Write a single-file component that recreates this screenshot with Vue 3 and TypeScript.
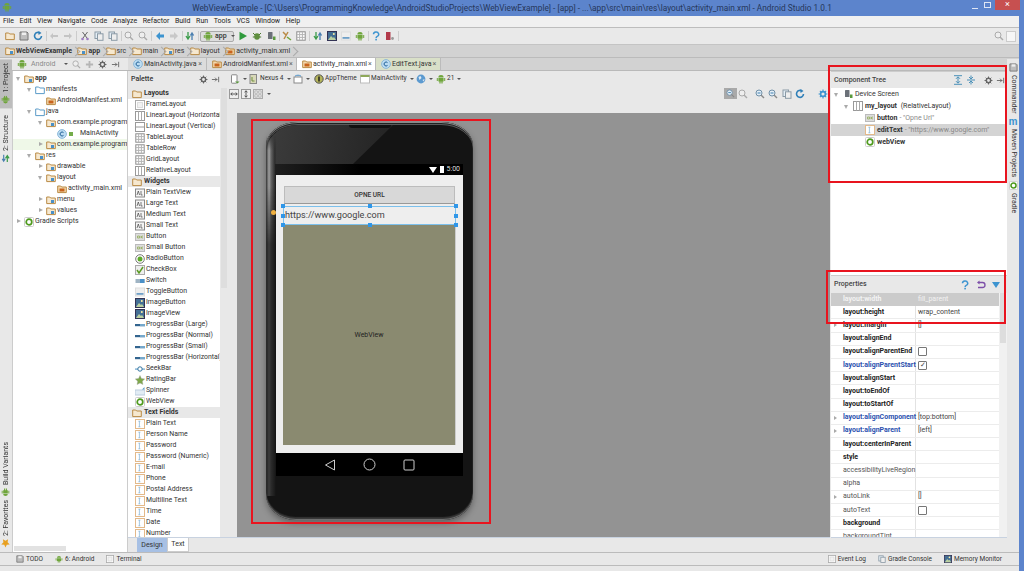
<script setup lang="ts">
interface TreeRow { label: string; depth: number; arrow?: 'open' | 'shut'; icon: string; bold?: boolean; hl?: boolean; lock?: boolean }
interface PalRow { label: string; icon?: string; head?: boolean }
interface PropRow { name: string; value?: string; weight?: 'b' | 'n' | 'blue'; arrow?: boolean; box?: 'on' | 'off'; sel?: boolean }

const menus = ['File', 'Edit', 'View', 'Navigate', 'Code', 'Analyze', 'Refactor', 'Build', 'Run', 'Tools', 'VCS', 'Window', 'Help']
const crumbs = [
  { t: 'WebViewExample', i: 'pkg', b: true }, { t: 'app', i: 'pkg', b: true }, { t: 'src', i: 'folder' },
  { t: 'main', i: 'folder' }, { t: 'res', i: 'pkg' }, { t: 'layout', i: 'folder' }, { t: 'activity_main.xml', i: 'xml' }
]
const tabs = [
  { t: 'MainActivity.java', i: 'cls', w: 79 }, { t: 'AndroidManifest.xml', i: 'xml', w: 90 },
  { t: 'activity_main.xml', i: 'xml', w: 79, on: true }, { t: 'EditText.java', i: 'cls', w: 65, tint: true }
]
const tree: TreeRow[] = [
  { label: 'app', depth: 0, arrow: 'open', icon: 'pkg', bold: true },
  { label: 'manifests', depth: 1, arrow: 'open', icon: 'blue' },
  { label: 'AndroidManifest.xml', depth: 2, icon: 'xml' },
  { label: 'java', depth: 1, arrow: 'open', icon: 'blue' },
  { label: 'com.example.programmingknowledge', depth: 2, arrow: 'open', icon: 'pkg' },
  { label: 'MainActivity', depth: 3, icon: 'cls', lock: true },
  { label: 'com.example.programmingknowledge', depth: 2, arrow: 'shut', icon: 'pkg', hl: true },
  { label: 'res', depth: 1, arrow: 'open', icon: 'pkg' },
  { label: 'drawable', depth: 2, arrow: 'shut', icon: 'pkg' },
  { label: 'layout', depth: 2, arrow: 'open', icon: 'pkg' },
  { label: 'activity_main.xml', depth: 3, icon: 'xml' },
  { label: 'menu', depth: 2, arrow: 'shut', icon: 'pkg' },
  { label: 'values', depth: 2, arrow: 'shut', icon: 'pkg' },
  { label: 'Gradle Scripts', depth: 0, arrow: 'shut', icon: 'web' }
]
const palette: PalRow[] = [
  { label: 'Layouts', head: true },
  { label: 'FrameLayout', icon: 'frame' }, { label: 'LinearLayout (Horizontal)', icon: 'lh' }, { label: 'LinearLayout (Vertical)', icon: 'lv' },
  { label: 'TableLayout', icon: 'grid' }, { label: 'TableRow', icon: 'grid' }, { label: 'GridLayout', icon: 'grid' }, { label: 'RelativeLayout', icon: 'lh' },
  { label: 'Widgets', head: true },
  { label: 'Plain TextView', icon: 'ab' }, { label: 'Large Text', icon: 'ab' }, { label: 'Medium Text', icon: 'ab' }, { label: 'Small Text', icon: 'ab' },
  { label: 'Button', icon: 'ok' }, { label: 'Small Button', icon: 'ok' }, { label: 'RadioButton', icon: 'radio' }, { label: 'CheckBox', icon: 'check' },
  { label: 'Switch', icon: 'switch' }, { label: 'ToggleButton', icon: 'toggle' }, { label: 'ImageButton', icon: 'img' }, { label: 'ImageView', icon: 'img' },
  { label: 'ProgressBar (Large)', icon: 'bar' }, { label: 'ProgressBar (Normal)', icon: 'bar' }, { label: 'ProgressBar (Small)', icon: 'bar' }, { label: 'ProgressBar (Horizontal)', icon: 'bar' },
  { label: 'SeekBar', icon: 'seek' }, { label: 'RatingBar', icon: 'star' }, { label: 'Spinner', icon: 'spin' }, { label: 'WebView', icon: 'web' },
  { label: 'Text Fields', head: true },
  ...['Plain Text', 'Person Name', 'Password', 'Password (Numeric)', 'E-mail', 'Phone', 'Postal Address', 'Multiline Text', 'Time', 'Date', 'Number'].map(label => ({ label, icon: 'field' }))
]
const props: PropRow[] = [
  { name: 'layout:width', value: 'fill_parent', sel: true, weight: 'b' },
  { name: 'layout:height', value: 'wrap_content', weight: 'b' },
  { name: 'layout:margin', value: '[]', weight: 'b', arrow: true },
  { name: 'layout:alignEnd', weight: 'b' },
  { name: 'layout:alignParentEnd', weight: 'b', box: 'off' },
  { name: 'layout:alignParentStart', weight: 'blue', box: 'on' },
  { name: 'layout:alignStart', weight: 'b' },
  { name: 'layout:toEndOf', weight: 'b' },
  { name: 'layout:toStartOf', weight: 'b' },
  { name: 'layout:alignComponent', value: '[top:bottom]', weight: 'blue', arrow: true },
  { name: 'layout:alignParent', value: '[left]', weight: 'blue', arrow: true },
  { name: 'layout:centerInParent', weight: 'b' },
  { name: 'style', weight: 'b' },
  { name: 'accessibilityLiveRegion' },
  { name: 'alpha' },
  { name: 'autoLink', value: '[]', arrow: true },
  { name: 'autoText', box: 'off' },
  { name: 'background', weight: 'b' },
  { name: 'backgroundTint' }
]
const comps = [
  { n: 'button', d: ' - "Opne Url"', i: 'ok' },
  { n: 'editText', d: ' - "https://www.google.com"', i: 'field', sel: true },
  { n: 'webView', d: '', i: 'web' }
]
const tools = [
  ['folder', 'save', 'sync'], ['undo', 'redo'], ['cut', 'copy', 'copy'], ['find', 'find'], ['back', 'fwd'], ['sdk']
]
const tools2 = [['run', 'bug', 'attach'], ['wrench', 'grid'], ['sdk', 'img', 'toggle', 'droid'], ['help', 'mon']]
const handles = [
  { x: 0, y: 0 }, { x: 50, y: 0 }, { x: 100, y: 0 }, { x: 0, y: 50 }, { x: 100, y: 50 }, { x: 0, y: 100 }, { x: 50, y: 100 }, { x: 100, y: 100 }
]
const hStyle = (h: { x: number; y: number }) => ({ left: `${h.x}%`, top: `${h.y}%` })
</script>

<template>
  <div class="app">
    <svg class="defs" width="0" height="0" aria-hidden="true">
      <defs>
        <symbol id="folder" viewBox="0 0 10 10"><path d="M.7 2h3l1 1h4.600v5.600H.7z" fill="#f6e8cf" stroke="#b98a45"/></symbol>
        <symbol id="blue" viewBox="0 0 10 10"><path d="M.7 2h3l1 1h4.600v5.600H.7z" fill="#fff" stroke="#5b9bc8"/></symbol>
        <symbol id="pkg" viewBox="0 0 10 10"><path d="M.7 2h3l1 1h4.600v5.600H.7z" fill="#f6e8cf" stroke="#b98a45"/><rect x="5" y="5" width="3" height="3" fill="#4a90c8"/></symbol>
        <symbol id="xml" viewBox="0 0 10 10"><path d="M.7 2h3l1 1h4.600v5.600H.7z" fill="#f3d9ae" stroke="#b98a45"/><rect x="2.500" y="4.500" width="5" height="3" fill="#c8641e"/></symbol>
        <symbol id="cls" viewBox="0 0 10 10"><circle cx="5" cy="5" r="4.400" fill="#bcdcf2" stroke="#8cb8d8"/><path d="M6.500 3.600a2 2 0 1 0 0 2.800" fill="none" stroke="#1f5f96"/></symbol>
        <symbol id="save" viewBox="0 0 10 10"><path d="M1 1h7l1 1v7H1z" fill="#bdbdbd" stroke="#777"/><rect x="3" y="1.500" width="4" height="2.500" fill="#eee"/></symbol>
        <symbol id="sync" viewBox="0 0 10 10"><path d="M8.500 5A3.500 3.500 0 1 1 7 2" fill="none" stroke="#2f7fb8" stroke-width="1.600"/><path d="M5.500 0l3 2-3 2z" fill="#2f7fb8"/></symbol>
        <symbol id="undo" viewBox="0 0 10 10"><path d="M1 5l3-3v2h5v2H4v2z" fill="#c4c4c4"/></symbol>
        <symbol id="redo" viewBox="0 0 10 10"><path d="M9 5L6 2v2H1v2h5v2z" fill="#c4c4c4"/></symbol>
        <symbol id="revert" viewBox="0 0 10 10"><path d="M3 2.500h3.500a2.500 2.500 0 0 1 0 5H2" fill="none" stroke="#7d4fa8" stroke-width="1.300"/><path d="M3.500.5L1 2.500l2.500 2z" fill="#7d4fa8"/></symbol>
        <symbol id="cut" viewBox="0 0 10 10"><path d="M2.500 1L7 7M7.500 1L3 7" stroke="#666" fill="none"/><circle cx="2.500" cy="8" r="1.300" fill="#9c7cc0"/><circle cx="7.500" cy="8" r="1.300" fill="#9c7cc0"/></symbol>
        <symbol id="copy" viewBox="0 0 10 10"><rect x="1" y="1" width="5.500" height="6.500" fill="#e4eef6" stroke="#8a9aa6"/><rect x="3.500" y="2.800" width="5.500" height="6.500" fill="#eee" stroke="#8a9aa6"/></symbol>
        <symbol id="find" viewBox="0 0 10 10"><circle cx="4" cy="4" r="3" fill="#eee" stroke="#aaa"/><path d="M6 6l3 3" stroke="#aaa" stroke-width="1.400"/></symbol>
        <symbol id="zoom" viewBox="0 0 10 10"><circle cx="4" cy="4" r="3" fill="#e4eef6" stroke="#6f8fa8"/><path d="M6 6l3 3" stroke="#8a8a8a" stroke-width="1.400"/><path d="M2.500 4h3" stroke="#3d7fb0"/></symbol>
        <symbol id="back" viewBox="0 0 10 10"><path d="M1 5l4-4v2.500h4v3H5V9z" fill="#3d94d0"/></symbol>
        <symbol id="fwd" viewBox="0 0 10 10"><path d="M9 5L5 1v2.500H1v3h4V9z" fill="#c8c8c8"/></symbol>
        <symbol id="plus" viewBox="0 0 10 10"><path d="M5 1v8M1 5h8" stroke="#b5b5b5" stroke-width="2"/></symbol>
        <symbol id="sdk" viewBox="0 0 10 10"><path d="M3 1v6M1 5l2 3 2-3" stroke="#3a9b4a" fill="none" stroke-width="1.300"/><path d="M7 9V3M5.400 4.500L7 2l1.600 2.500" stroke="#4a7fb0" fill="none" stroke-width="1.300"/></symbol>
        <symbol id="droid" viewBox="0 0 10 10"><path d="M2.400 4h5.200v3.600H6.600V9.500H5.400V7.600H4.600V9.500H3.400V7.600H2.400zM2.400 3.500A2.600 2.400 0 0 1 7.600 3.500zM.8 4h1v3h-1zM8.200 4h1v3h-1z" fill="#6fa53b"/></symbol>
        <symbol id="run" viewBox="0 0 10 10"><path d="M1.500.8L9 5l-7.500 4.200z" fill="#2f9a3c"/></symbol>
        <symbol id="bug" viewBox="0 0 10 10"><ellipse cx="5" cy="5.500" rx="2.800" ry="3.300" fill="#5f8f3e"/><path d="M1 2l2 2M9 2L7 4M.8 6h2M7.200 6h2" stroke="#4d7a30"/></symbol>
        <symbol id="attach" viewBox="0 0 10 10"><rect x="2" y="1" width="4.500" height="7" rx=".6" fill="#6b7078"/><path d="M7 5.500h2.500v3.500H7z" fill="#5a9a3e"/></symbol>
        <symbol id="dev" viewBox="0 0 10 10"><rect x="1.500" y=".8" width="5.500" height="8.400" rx=".6" fill="#fff" stroke="#888"/><path d="M5 7.500h4.500L7.500 9.500z" fill="#5a9a3e"/></symbol>
        <symbol id="nx" viewBox="0 0 10 10"><rect x="1" y=".5" width="6.500" height="9" fill="#d8d8b8" stroke="#888"/><path d="M3 3v4h2.500" stroke="#6f8f3e" fill="none"/></symbol>
        <symbol id="rot" viewBox="0 0 10 10"><rect x="1" y="3" width="8" height="6" fill="#fff" stroke="#888"/><path d="M2 2.200a4 3 0 0 1 6 0" fill="none" stroke="#4a90c8"/></symbol>
        <symbol id="theme" viewBox="0 0 10 10"><circle cx="5" cy="5" r="4.200" fill="#b4b45a" stroke="#555"/><path d="M5 2.500v5" stroke="#222" stroke-width="1.500"/></symbol>
        <symbol id="act" viewBox="0 0 10 10"><rect x=".5" y="1" width="9" height="8" fill="#fff" stroke="#bbb"/><rect x=".5" y="1" width="9" height="2" fill="#8ea85a"/></symbol>
        <symbol id="globe" viewBox="0 0 10 10"><circle cx="5" cy="5" r="4.400" fill="#5c9ad0"/><path d="M2.500 3l2-1 1 2-2 2zM6.500 6l2-1-.6 2.500z" fill="#dfe9f2"/></symbol>
        <symbol id="wrench" viewBox="0 0 10 10"><path d="M1 1l3 3M6 1L2 8" stroke="#b98a45" stroke-width="1.500"/><path d="M5 6l4 3" stroke="#6fa53b" stroke-width="1.500"/></symbol>
        <symbol id="grid" viewBox="0 0 10 10"><rect x=".8" y=".8" width="8.400" height="8.400" fill="#fff" stroke="#8d8d8d"/><path d="M.8 3.600h8.400M.8 6.400h8.400M3.600.8v8.400M6.400.8v8.400" stroke="#b5b5b5"/></symbol>
        <symbol id="fitw" viewBox="0 0 10 10"><rect x=".5" y=".5" width="9" height="9" fill="#eee" stroke="#999"/><path d="M1.800 5h6.400M3.200 3.500L1.800 5l1.400 1.500M6.800 3.500L8.200 5 6.800 6.500" fill="none" stroke="#333" stroke-width=".8"/></symbol>
        <symbol id="fith" viewBox="0 0 10 10"><rect x=".5" y=".5" width="9" height="9" fill="#eee" stroke="#999"/><path d="M5 1.800v6.400M3.500 3.200L5 1.800l1.500 1.400M3.500 6.800L5 8.200l1.500-1.400" fill="none" stroke="#333" stroke-width=".8"/></symbol>
        <symbol id="dots" viewBox="0 0 10 10"><rect x=".5" y=".5" width="9" height="9" fill="#ddd" stroke="#aaa"/><path d="M2 2h2.200v2.200H2zM5.800 2H8v2.200H5.800zM2 5.800h2.200V8H2zM5.800 5.800H8V8H5.800z" fill="#fff" stroke="#888" stroke-width=".5"/></symbol>
        <symbol id="expand" viewBox="0 0 10 10"><path d="M1 .7h8M1 9.300h8" stroke="#4a90b8"/><path d="M5 2v6M3 3.800L5 1.800l2 2M3 6.200L5 8.200l2-2" fill="none" stroke="#4a90b8"/></symbol>
        <symbol id="collapse" viewBox="0 0 10 10"><path d="M1 5h8" stroke="#4a90b8"/><path d="M5 .5v3M3 2l2 2 2-2M5 9.500v-3M3 8l2-2 2 2" fill="none" stroke="#4a90b8"/></symbol>
        <symbol id="help" viewBox="0 0 10 10"><path d="M2.500 3.300a2.600 2.300 0 1 1 3.700 2.100c-.8.400-1.100.9-1.100 1.500" fill="none" stroke="#3d94d0" stroke-width="1.500"/><rect x="4.300" y="7.800" width="1.600" height="1.600" fill="#3d94d0"/></symbol>
        <symbol id="mon" viewBox="0 0 10 10"><rect x="1" y="1" width="4.500" height="8" fill="#b23a4a"/><circle cx="7.500" cy="7.500" r="1.400" fill="#999"/></symbol>
        <symbol id="frame" viewBox="0 0 10 10"><rect x=".5" y=".5" width="9" height="9" fill="#fff" stroke="#aaa"/><rect x="2.500" y="2.500" width="5" height="5" fill="#f2f2f2" stroke="#ddd"/></symbol>
        <symbol id="lh" viewBox="0 0 10 10"><rect x=".5" y=".5" width="9" height="9" fill="#fff" stroke="#999"/><path d="M3.500.5v9M6.500.5v9" stroke="#aaa"/></symbol>
        <symbol id="lv" viewBox="0 0 10 10"><rect x=".5" y=".5" width="9" height="9" fill="#fff" stroke="#999"/><path d="M.5 5h9" stroke="#999"/></symbol>
        <symbol id="ab" viewBox="0 0 10 10"><rect x=".5" y="1" width="9" height="8" fill="#f4f4f4" stroke="#888"/><path d="M2 7l1.300-4L4.600 7M6 3v4h1.600" fill="none" stroke="#444" stroke-width=".7"/></symbol>
        <symbol id="ok" viewBox="0 0 10 10"><rect x=".5" y="1.500" width="9" height="7" fill="#ddd" stroke="#bbb"/><path d="M2.500 4h2v2h-2zM6 3.800v2.400M8 3.800L6 5l2 1.200" fill="none" stroke="#8aa84a" stroke-width=".7"/></symbol>
        <symbol id="radio" viewBox="0 0 10 10"><circle cx="5" cy="5" r="4.300" fill="#fff" stroke="#777"/><circle cx="5" cy="5" r="2.500" fill="#5caa28"/></symbol>
        <symbol id="check" viewBox="0 0 10 10"><rect x=".5" y=".5" width="9" height="9" fill="#eee" stroke="#aaa"/><path d="M2 5l2 3 4-6" fill="none" stroke="#5a9a22" stroke-width="1.500"/></symbol>
        <symbol id="switch" viewBox="0 0 10 10"><rect x=".5" y="3" width="9" height="4" fill="#9fb4c4"/><rect x="5" y="3" width="4.500" height="4" fill="#4a90c8"/></symbol>
        <symbol id="toggle" viewBox="0 0 10 10"><rect x=".5" y="1" width="9" height="8" fill="#eee" stroke="#ddd"/><rect x="1.500" y="6" width="7" height="1.800" fill="#6fa0c8"/></symbol>
        <symbol id="img" viewBox="0 0 10 10"><rect x=".5" y=".5" width="9" height="9" fill="#446f94" stroke="#335"/><path d="M1 9l3-4 2 2 1-1 2 3z" fill="#bbd0a0"/><circle cx="6.800" cy="3" r="1" fill="#fff2a8"/></symbol>
        <symbol id="bar" viewBox="0 0 10 10"><rect y="4" width="10" height="2.200" fill="#33658f"/><rect x="5" y="4" width="5" height="2.200" fill="#75a8cc"/></symbol>
        <symbol id="seek" viewBox="0 0 10 10"><rect y="4.400" width="10" height="1.400" fill="#7fb0d4"/><circle cx="5" cy="5" r="2.200" fill="#fff" stroke="#33759f"/></symbol>
        <symbol id="star" viewBox="0 0 10 10"><path d="M5 .5l1.400 3 3.300.4-2.400 2.300.6 3.300L5 8l-2.900 1.500.6-3.300L.3 3.900l3.300-.4z" fill="#7ea84a" stroke="#999" stroke-width=".4"/></symbol>
        <symbol id="ostar" viewBox="0 0 10 10"><path d="M5 .5l1.400 3 3.300.4-2.400 2.300.6 3.300L5 8l-2.900 1.500.6-3.300L.3 3.900l3.300-.4z" fill="#e8a020"/></symbol>
        <symbol id="spin" viewBox="0 0 10 10"><rect y="4" width="10" height="5" fill="#e2ecf4" stroke="#bcd"/><path d="M9.500 1L7 3.500h2.500z" fill="#5a9ac8"/></symbol>
        <symbol id="web" viewBox="0 0 10 10"><rect x=".5" y=".5" width="9" height="9" rx="1" fill="#fff" stroke="#ccc"/><circle cx="5" cy="5" r="2.800" fill="none" stroke="#4f9a1e" stroke-width="1.700"/></symbol>
        <symbol id="field" viewBox="0 0 10 10"><rect x=".5" y=".5" width="9" height="9" fill="#fff" stroke="#e3b98a"/><path d="M3.400 2.200h2M3.400 7.800h2M4.400 2.200v5.600" stroke="#7fb0d4" stroke-width=".7"/></symbol>
        <symbol id="gear" viewBox="0 0 10 10"><circle cx="5" cy="5" r="2.400" fill="none" stroke="currentColor" stroke-width="1.600"/><path d="M5 .6v2M5 7.400v2M.6 5h2M7.400 5h2M1.900 1.900l1.400 1.400M6.700 6.700l1.400 1.400M8.100 1.900L6.700 3.300M3.300 6.700L1.900 8.100" stroke="currentColor" stroke-width="1.100"/></symbol>
        <symbol id="pin" viewBox="0 0 10 10"><path d="M1 5h6M4.500 3l2 2-2 2M8.500 2v6" fill="none" stroke="#666"/></symbol>
      </defs>
    </svg>

    <header class="title">
      <svg class="ico ttl-logo"><use href="#droid" /></svg>
      <span class="ttl-text">WebViewExample - [C:\Users\ProgrammingKnowledge\AndroidStudioProjects\WebViewExample] - [app] - ...\app\src\main\res\layout\activity_main.xml - Android Studio 1.0.1</span>
      <div class="win">
        <span class="min"></span><span class="max"></span><span class="close">×</span>
      </div>
    </header>

    <nav class="menu">
      <span v-for="m in menus" :key="m">{{ m }}</span>
    </nav>

    <div class="toolbar">
      <template v-for="(g, gi) in tools" :key="gi">
        <span class="tg"><svg v-for="(t, i) in g" :key="i" class="ico"><use :href="`#${t}`" /></svg></span>
      </template>
      <span class="appsel"><svg class="ico"><use href="#droid" /></svg>app<i class="caret"></i></span>
      <template v-for="(g, gi) in tools2" :key="gi">
        <span class="tg"><svg v-for="(t, i) in g" :key="i" class="ico"><use :href="`#${t}`" /></svg></span>
      </template>
      <span class="grow"></span>
      <svg class="ico"><use href="#find" /></svg>
      <span class="user"></span>
    </div>

    <div class="crumbs">
      <span v-for="c in crumbs" :key="c.t" class="crumb" :class="{ b: c.b }">
        <svg class="ico"><use :href="`#${c.i}`" /></svg>{{ c.t }}<i class="chev"></i>
      </span>
    </div>

    <div class="tabrow">
      <div class="projhead">
        <svg class="ico"><use href="#droid" /></svg><span class="phl">Android</span><i class="caret"></i>
        <svg class="ico sm"><use href="#find" /></svg>
        <svg class="ico sm"><use href="#plus" /></svg>
        <svg class="ico sm"><use href="#gear" /></svg>
        <svg class="ico sm"><use href="#pin" /></svg>
      </div>
      <div v-for="t in tabs" :key="t.t" class="tab" :class="{ on: t.on, tint: t.tint }" :style="{ width: t.w + 'px' }">
        <svg class="ico"><use :href="`#${t.i}`" /></svg>{{ t.t }}<b>×</b>
      </div>
    </div>

    <div class="body">
      <aside class="strip left">
        <span class="vt active"><svg class="ico vi"><use href="#droid" /></svg>1: Project</span>
        <span class="vt"><svg class="ico vi"><use href="#sdk" /></svg>2: Structure</span>
        <span class="grow"></span>
        <span class="vt bv"><svg class="ico vi"><use href="#droid" /></svg>Build Variants</span>
        <span class="vt fav"><svg class="ico vi"><use href="#ostar" /></svg>2: Favorites</span>
      </aside>

      <section class="project">
        <div v-for="(r, i) in tree" :key="i" class="trow" :class="{ hl: r.hl, b: r.bold }" :style="{ paddingLeft: r.depth * 11 + 'px' }">
          <i class="arr" :class="r.arrow"></i>
          <svg class="ico"><use :href="`#${r.icon}`" /></svg>
          <i v-if="r.lock" class="lock"></i>{{ r.label }}
        </div>
        <span class="grow"></span>
        <div class="hscroll"></div>
      </section>

      <section class="editor">
        <div class="edtop">
          <div class="palette">
            <div class="palhead"><span>Palette</span><span class="grow"></span><svg class="ico sm"><use href="#gear" /></svg><svg class="ico sm"><use href="#pin" /></svg></div>
            <div class="palbody">
              <div class="pallist">
                <div v-for="p in palette" :key="p.label" class="prow" :class="{ head: p.head }">
                  <svg v-if="p.head" class="ico"><use href="#folder" /></svg>
                  <svg v-else class="ico"><use :href="`#${p.icon}`" /></svg>
                  {{ p.label }}
                </div>
              </div>
              <div class="vscroll"><i></i></div>
            </div>
          </div>
          <div class="design">
            <div class="dt1">
              <span class="dg w19"><svg class="ico"><use href="#dev" /></svg><i class="caret"></i></span>
              <span class="dg w44"><svg class="ico"><use href="#nx" /></svg><span>Nexus 4</span><i class="caret"></i></span>
              <span class="dg w21"><svg class="ico"><use href="#rot" /></svg><i class="caret"></i></span>
              <span class="dg w46"><svg class="ico"><use href="#theme" /></svg><span>AppTheme</span></span>
              <span class="dg w56"><svg class="ico"><use href="#act" /></svg><span>MainActivity</span><i class="caret"></i></span>
              <span class="dg w20"><svg class="ico"><use href="#globe" /></svg><i class="caret"></i></span>
              <span class="dg"><svg class="ico"><use href="#droid" /></svg><span>21</span><i class="caret"></i></span>
            </div>
            <div class="dt2">
              <svg class="ico bx"><use href="#fitw" /></svg>
              <svg class="ico bx"><use href="#fith" /></svg>
              <svg class="ico bx"><use href="#dots" /></svg><i class="caret"></i>
              <span class="grow"></span>
              <span class="dsel"><svg class="ico sm"><use href="#zoom" /></svg></span>
              <svg class="ico m1"><use href="#find" /></svg>
              <svg class="ico m2"><use href="#zoom" /></svg>
              <svg class="ico m3"><use href="#zoom" /></svg>
              <svg class="ico m3"><use href="#copy" /></svg>
              <svg class="ico m3"><use href="#sync" /></svg>
              <svg class="ico last"><use href="#gear" /></svg>
            </div>
            <div class="canvas">
              <div class="phone">
                <i class="glare"></i>
                <i class="sheen"></i>
                <i class="earpiece"></i>
                <div class="status">
                  <i class="wifi"></i><i class="batt"></i><span>5:00</span>
                </div>
                <div class="screen">
                  <div class="btn">OPNE URL</div>
                  <div class="edit">
                    https://www.google.com
                    <i v-for="(h, i) in handles" :key="i" class="h" :style="hStyle(h)"></i>
                    <i class="anchor"></i>
                  </div>
                  <div class="webview">WebView</div>
                </div>
                <div class="navbar">
                  <svg width="12" height="12" viewBox="0 0 12 12"><path d="M10.500 1L1.500 6l9 5z" fill="none" stroke="#ccc" stroke-width="1"/></svg>
                  <svg width="13" height="13" viewBox="0 0 13 13"><circle cx="6.500" cy="6.500" r="5.500" fill="none" stroke="#ccc" stroke-width="1"/></svg>
                  <svg width="12" height="12" viewBox="0 0 12 12"><rect x="1" y="1" width="10" height="10" rx="1" fill="none" stroke="#ccc" stroke-width="1"/></svg>
                </div>
              </div>
            </div>
          </div>
        </div>
        <div class="edtabs"><span class="dtab on">Design</span><span class="dtab">Text</span></div>
      </section>

      <aside class="rpanel">
        <div class="phead">Component Tree<span class="grow"></span>
          <svg class="ico"><use href="#expand" /></svg><svg class="ico"><use href="#collapse" /></svg><svg class="ico sm g"><use href="#gear" /></svg><svg class="ico sm"><use href="#pin" /></svg>
        </div>
        <div class="ctree">
          <div class="crow"><i class="arr open"></i><svg class="ico"><use href="#attach" /></svg>Device Screen</div>
          <div class="crow d1"><i class="arr open"></i><svg class="ico"><use href="#lh" /></svg><b>my_layout</b>&nbsp;(RelativeLayout)</div>
          <div v-for="c in comps" :key="c.n" class="crow d2" :class="{ sel: c.sel }">
            <svg class="ico"><use :href="`#${c.i}`" /></svg><b>{{ c.n }}</b><span class="dim">{{ c.d }}</span>
          </div>
        </div>
        <div class="phead props-h">Properties<span class="grow"></span>
          <svg class="ico"><use href="#help" /></svg><svg class="ico"><use href="#revert" /></svg><i class="filter"></i>
        </div>
        <div class="pwrap">
          <div class="ptable">
            <div v-for="p in props" :key="p.name" class="pr" :class="{ sel: p.sel }">
              <div class="pn" :class="p.weight">
                <i class="tri" :class="{ show: p.arrow }"></i>{{ p.name }}
              </div>
              <div class="pv">
                <template v-if="p.value">{{ p.value }}</template>
                <i v-if="p.box" class="cb" :class="p.box">{{ p.box === 'on' ? '✓' : '' }}</i>
              </div>
            </div>
          </div>
          <div class="pscroll"><i></i></div>
        </div>
        <div class="pfoot"></div>
      </aside>

      <aside class="strip right">
        <span class="vt r"><svg class="ico vi"><use href="#save" /></svg>Commander</span>
        <span class="vt r"><b class="m">m</b>Maven Projects</span>
        <span class="vt r"><svg class="ico vi"><use href="#web" /></svg>Gradle</span>
      </aside>
    </div>

    <footer class="tools">
      <span class="ti first"><svg class="ico"><use href="#save" /></svg>TODO</span>
      <span class="ti"><svg class="ico"><use href="#droid" /></svg>6: Android</span>
      <span class="ti"><svg class="ico"><use href="#frame" /></svg>Terminal</span>
      <span class="grow"></span>
      <span class="ti"><svg class="ico"><use href="#frame" /></svg>Event Log</span>
      <span class="ti"><svg class="ico"><use href="#copy" /></svg>Gradle Console</span>
      <span class="ti last"><svg class="ico"><use href="#img" /></svg>Memory Monitor</span>
    </footer>
    <div class="statusbar"></div>
    <div class="winedge"></div>

    <i class="redbox rb1"></i>
    <i class="redbox rb2"></i>
    <i class="redbox rb3"></i>
  </div>
</template>

<style>
html, body { margin: 0; padding: 0; background: #e8e8e8; }
</style>

<style scoped>
.app { position: relative; width: 1024px; height: 571px; overflow: hidden; display: flex; flex-direction: column; background: #e8e8e8; font: 7px/1 Roboto, "Open Sans", sans-serif; color: #333; padding-right: 5px; box-sizing: border-box; }
.defs { position: absolute; }
.grow { flex: 1; }
.ico { width: 10px; height: 10px; flex: none; display: block; color: #666; }
.ico.sm { width: 9px; height: 9px; }
.caret { width: 0; height: 0; border: 2px solid transparent; border-top: 2.5px solid #555; border-bottom: 0; margin-left: 2px; flex: none; display: block; }

.title { height: 16px; margin-right: -5px; background: #5c84cc; display: flex; align-items: center; position: relative; flex: none; color: #26375a; }
.ttl-logo { position: absolute; left: 2px; top: 2px; }
.ttl-text { margin: 0 auto; font-size: 8.3px; white-space: nowrap; }
.win { position: absolute; right: 4px; top: 0; display: flex; align-items: flex-start; }
.min { width: 6px; height: 1px; background: #dfe6f4; margin: 8px 6px 0 0; }
.max { width: 5px; height: 4px; border: 1px solid #dfe6f4; margin: 2px 4px 0 0; }
.close { width: 25px; height: 10px; background: #c75050; color: #fff; font-size: 9px; line-height: 9px; text-align: center; }

.menu { height: 11px; flex: none; padding-left: 3px; display: flex; align-items: center; gap: 5.6px; background: #f0f0f0; border-bottom: 1px solid #bdbdbd; color: #222; }
.toolbar { height: 16px; flex: none; display: flex; align-items: center; padding: 0 3px 0 2px; background: #e9e9e9; }
.tg { display: flex; gap: 4px; padding: 0 3px 0 2.5px; border-right: 1px solid #ccc; }
.tg:last-of-type { border: 0; }
.appsel { height: 11px; box-sizing: border-box; padding: 0 2px; margin: 0 1px 0 1px; display: flex; align-items: center; gap: 2px; border: 1px solid #aaa; border-radius: 2px; background: #ddd; font-weight: 500; width: 34px; }
.user { width: 8px; height: 9px; background: #f6f6f6; border: 1px solid #ccc; margin-left: 2px; }

.crumbs { height: 13px; flex: none; display: flex; align-items: center; padding-left: 5px; background: #d2d2d2; border-top: 1px solid #c4c4c4; box-sizing: border-box; }
.crumb { display: flex; align-items: center; gap: 1px; margin-right: -1.5px; }
.crumb.b { font-weight: 700; }
.chev { width: 6px; height: 6px; border-top: 1px solid #aaa; border-right: 1px solid #aaa; transform: rotate(45deg); margin-left: -1px; }

.tabrow { height: 14px; flex: none; display: flex; background: #d2d2d2; border-bottom: 1px solid #b9b9b9; box-sizing: border-box; border-top: 1px solid #bbb; }
.projhead { width: 128px; flex: none; display: flex; align-items: center; padding-left: 17px; gap: 4px; box-sizing: border-box; background: #e8e8e8; color: #888; }
.phl { width: 27px; }
.tab { height: 12px; display: flex; align-items: center; gap: 1px; padding: 0 4px 0 5px; box-sizing: border-box; background: #dcdcdc; border-right: 1px solid #bbb; white-space: nowrap; }
.tab b { font-weight: 400; margin-left: auto; color: #666; }
.tab.on { background: #fff; }
.tab.tint { background: #d9e0c8; }

.body { flex: 1; min-height: 0; display: flex; }
.strip { width: 12px; flex: none; display: flex; flex-direction: column; align-items: center; background: #e8e8e8; }
.strip.left { border-right: 1px solid #ccc; }
.vt { writing-mode: vertical-rl; transform: rotate(180deg); display: flex; align-items: center; gap: 3px; padding: 2px 0 4px; width: 12px; white-space: nowrap; margin-bottom: 7px; }
.vt.active { background: #bdbdbd; margin-top: -12px; padding-top: 4px; margin-bottom: 3px; }
.vt.bv { margin-bottom: -3px; }
.vt.fav { margin-bottom: 2px; }
.vi { width: 9px; height: 9px; }
.vt.r { transform: none; margin: 0 0 4px; padding: 0; gap: 3px; }
.m { color: #3d94d0; font-size: 10px; writing-mode: horizontal-tb; line-height: 8px; }
.strip.right { padding-top: 4px; margin-top: -12px; }

.project { width: 115px; flex: none; background: #fff; display: flex; flex-direction: column; padding-top: 2px; box-sizing: border-box; overflow: hidden; border-right: 1px solid #ccc; }
.trow { height: 11px; flex: none; display: flex; align-items: center; white-space: nowrap; gap: 1px; }
.trow.hl { background: #eff8e8; }
.trow.b { font-weight: 700; }
.arr { width: 10px; flex: none; height: 5px; position: relative; display: block; }
.arr.open::after { content: ""; position: absolute; left: 3px; top: 1px; border: 2.5px solid transparent; border-top: 4px solid #aaa; border-bottom: 0; }
.arr.shut::after { content: ""; position: absolute; left: 4px; top: 0; border: 2.5px solid transparent; border-left: 4px solid #aaa; border-right: 0; }
.lock { width: 10px; flex: none; height: 4px; display: block; margin-left: 1px; background: linear-gradient(90deg, #74ac4a 40%, transparent 40%); }
.hscroll { height: 5px; width: 52px; margin: 0 0 1px 1px; background: #e2e2e2; flex: none; }

.editor { flex: 1; min-width: 0; display: flex; flex-direction: column; }
.edtop { flex: 1; min-height: 0; display: flex; }
.palette { width: 100px; flex: none; display: flex; flex-direction: column; }
.palhead { height: 17px; flex: none; display: flex; align-items: center; gap: 3px; padding: 0 8px 0 3px; font-weight: 500; background: #e8e8e8; }
.palbody { flex: 1; min-height: 0; display: flex; }
.pallist { width: 92px; flex: none; background: #fff; overflow: hidden; }
.prow { height: 11px; display: flex; align-items: center; gap: 1px; padding-left: 7px; white-space: nowrap; font-size: 6.9px; }
.prow.head { padding-left: 4px; background: #e8e8e8; font-weight: 700; gap: 2px; font-size: 7px; }
.vscroll { width: 6px; margin-left: 1px; }
.vscroll i { display: block; height: 200px; background: #dedede; }

.design { flex: 1; min-width: 0; display: flex; flex-direction: column; }
.dt1 { height: 15px; flex: none; display: flex; align-items: center; padding-left: 2px; font-size: 6.5px; }
.dg { display: flex; align-items: center; gap: 1px; flex: none; height: 11px; box-sizing: border-box; }
.w19 { width: 19px; } .w44 { width: 44px; } .w21 { width: 21px; } .w46 { width: 46px; } .w56 { width: 56px; } .w20 { width: 20px; }
.dt2 { height: 15px; flex: none; display: flex; align-items: center; gap: 2px; padding: 0 2px 0 1px; margin-bottom: 12px; }
.bx { background: #f2f2f2; }
.dsel { width: 13px; height: 11px; background: #a9a9a9; display: flex; align-items: center; justify-content: center; }
.m1 { margin-left: -1px; }
.m2 { margin-left: 5px; }
.m3 { margin-left: 1.5px; }
.dt2 .last { margin-left: 11px; color: #3d94d0; }
.canvas { flex: 1; min-height: 0; margin-left: 9px; background: #939393; padding: 9px 0 0 29px; }

.phone { position: relative; width: 207px; height: 398px; box-sizing: border-box; padding: 42px 10px 0; border-radius: 32px 32px 30px 30px / 24px 24px 26px 26px; background: #141414; box-shadow: 0 3px 6px rgba(0,0,0,.35), inset 0 1px 0 #8a8a8a, inset 0 2px 0 #222, inset 0 3px 0 #5a5a5a, inset 0 -1px 1px #777, inset 0 -3px 1px #333; }
.glare { position: absolute; left: 2px; top: 3px; width: 125px; height: 39px; border-radius: 30px 0 0 0 / 22px 0 0 0; background: linear-gradient(100deg, #3c3c3c, #232323); clip-path: polygon(0 0, 100% 0, 68% 100%, 0 100%); }
.sheen { position: absolute; left: 0; top: 14px; bottom: 24px; width: 10px; background: linear-gradient(90deg, #333 0, #a0a0a0 3px, #666 5px, #2a2a2a 9px, transparent 10px); -webkit-mask-image: linear-gradient(180deg, transparent 0, #000 4%, #000 14%, rgba(0,0,0,.3) 30%, rgba(0,0,0,.3) 100%); mask-image: linear-gradient(180deg, transparent 0, #000 4%, #000 14%, rgba(0,0,0,.3) 30%, rgba(0,0,0,.3) 100%); }
.earpiece { position: absolute; left: 83px; top: 3px; width: 42px; height: 3px; border-radius: 0 0 4px 4px; background: #111; }
.status { position: relative; height: 11px; background: linear-gradient(90deg, #1e1e1e, #000 45%); display: flex; align-items: center; justify-content: flex-end; gap: 3px; padding-right: 3px; color: #ddd; font: 7px/1 Roboto, sans-serif; }
.wifi { width: 0; height: 0; border: 4px solid transparent; border-top: 6px solid #fff; border-bottom: 0; }
.batt { width: 4px; height: 7px; background: #fff; }
.screen { position: relative; height: 278px; box-sizing: border-box; padding: 11px 7px 8px; background: #eee; display: flex; flex-direction: column; }
.btn { height: 18px; box-sizing: border-box; margin: 0 1px; background: #d8d8d8; border: 1px solid #bcbcbc; border-bottom: 1px solid #999; display: flex; align-items: center; justify-content: center; font: 500 6.5px/1 Roboto, sans-serif; color: #333; flex: none; }
.edit { position: relative; height: 19px; margin-top: 2px; flex: none; display: flex; align-items: center; padding-left: 2px; font: 9.1px/1 Roboto, sans-serif; color: #444; outline: 1px solid #7cc0ec; outline-offset: -1px; box-sizing: border-box; }
.h { position: absolute; width: 4px; height: 4px; margin: -2px 0 0 -2px; background: #2f96e8; }
.anchor { position: absolute; left: -12px; top: 4px; width: 5px; height: 5px; border-radius: 50%; background: #f0b040; }
.webview { flex: 1; background: #8a8a70; border-right: 1px solid #ccc; display: flex; align-items: center; justify-content: center; font: 7px/1 Roboto, sans-serif; color: #222; }
.navbar { position: relative; height: 23px; background: #000; display: flex; align-items: center; justify-content: center; gap: 27px; }

.edtabs { height: 15px; flex: none; display: flex; padding-left: 9px; background: #e8e8e8; border-top: 1px solid #c8d2e0; box-sizing: border-box; }
.dtab { width: 22px; display: flex; align-items: center; justify-content: center; background: #fff; border: 1px solid #ccc; border-top: 0; box-sizing: border-box; }
.dtab.on { width: 30px; background: #a7c0e4; border: 0; }

.rpanel { width: 176px; flex: none; margin-left: 1px; display: flex; flex-direction: column; }
.phead { height: 17px; flex: none; display: flex; align-items: center; gap: 3px; padding: 0 2px 0 3px; font-weight: 500; color: #444; background: #e8e8e8; border-top: 1px solid #ccc; box-sizing: border-box; }
.ctree { height: 187px; flex: none; background: #fff; }
.crow { height: 12px; display: flex; align-items: center; gap: 2px; white-space: nowrap; }
.crow.d1 { padding-left: 10px; }
.crow.d2 { padding-left: 34px; }
.crow b { font-weight: 700; }
.crow.sel { background: #d4d4d4; }
.dim { color: #888; }
.g { margin-left: 5px; }
.props-h { height: 18px; padding-right: 7px; gap: 6px; }
.filter { width: 0; height: 0; border: 4px solid transparent; border-top: 6px solid #3d94d0; border-bottom: 0; }
.pwrap { flex: 1; min-height: 0; display: flex; overflow: hidden; background: #fff; }
.ptable { width: 168px; flex: none; }
.pr { height: 13.2px; display: flex; box-sizing: border-box; border-bottom: 1px solid #ececec; align-items: center; }
.pn { width: 85px; flex: none; box-sizing: border-box; display: flex; align-items: center; color: #555; white-space: nowrap; height: 100%; border-right: 1px solid #e2e2e2; }
.tri { width: 3px; margin: 0 6px 0 3px; height: 0; border: 2.5px solid transparent; border-left: 3.5px solid transparent; border-right: 0; box-sizing: border-box; flex: none; }
.tri.show { border-left-color: #aaa; }
.pn.b { font-weight: 700; color: #222; }
.pn.blue { font-weight: 700; color: #2b4fae; }
.pv { padding-left: 2px; color: #444; display: flex; align-items: center; }
.pr.sel { background: #cbcbcb; border: 0; }
.pr.sel .pn, .pr.sel .pv { color: #f3f3f3; border-color: transparent; }
.cb { width: 7px; height: 7px; border: 1px solid #777; border-radius: 1px; display: flex; align-items: center; justify-content: center; font-style: normal; background: #fff; }
.pscroll { width: 8px; flex: none; background: #f1f1f1; }
.pscroll i { display: block; height: 50px; background: #ddd; margin: 0 1px; }
.pfoot { height: 15px; flex: none; background: #e8e8e8; border-top: 1px solid #c8d2e0; box-sizing: border-box; }

.tools { height: 13px; flex: none; display: flex; align-items: center; gap: 12px; border-top: 1px solid #bbb; box-sizing: border-box; background: #e8e8e8; font-size: 6.5px; }
.ti { display: flex; align-items: center; gap: 2px; white-space: nowrap; }
.ti .ico { width: 8px; height: 8px; }
.ti.first { margin-left: 16px; }
.ti.last { margin-right: 17px; }
.statusbar { height: 6px; flex: none; border-top: 1px solid #bbb; box-sizing: border-box; }
.winedge { position: absolute; right: 0; top: 16px; bottom: 0; width: 5px; background: #5c84cc; }

.redbox { position: absolute; box-sizing: border-box; border: 2px solid #e8141e; pointer-events: none; }
.rb1 { left: 251px; top: 119px; width: 240px; height: 405px; }
.rb2 { left: 828px; top: 65px; width: 179px; height: 118px; }
.rb3 { left: 826px; top: 270px; width: 180px; height: 54px; }
</style>
